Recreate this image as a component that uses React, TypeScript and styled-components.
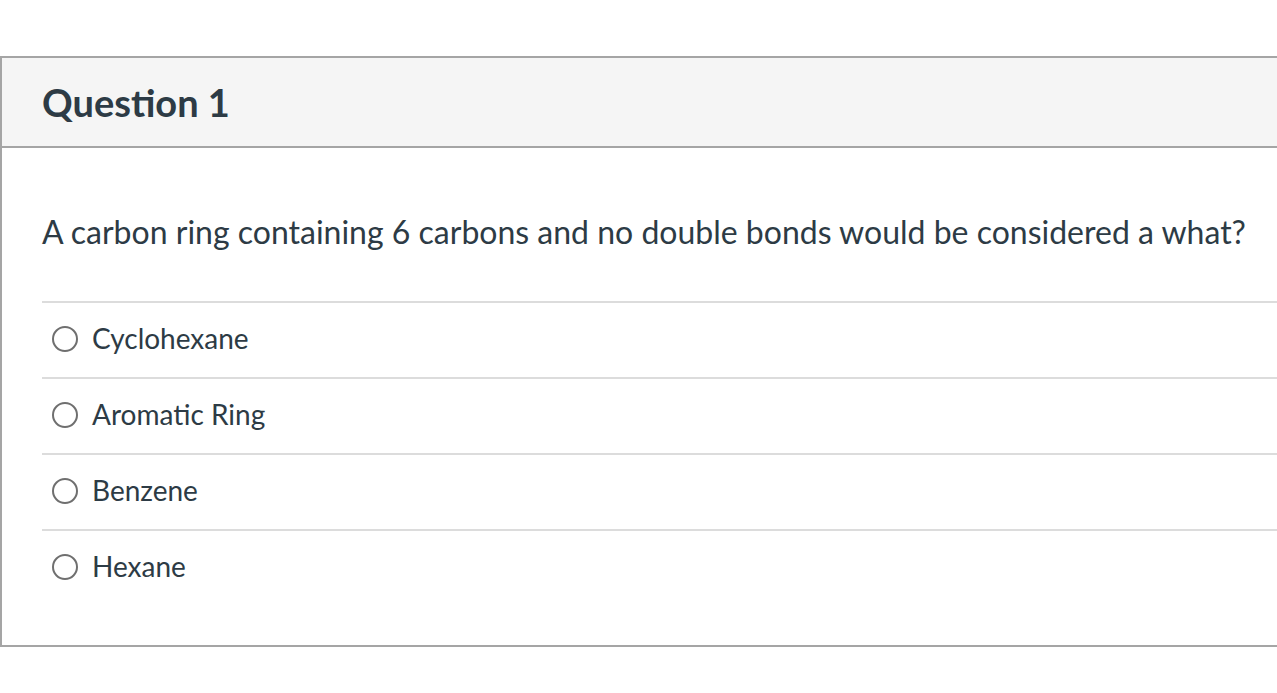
import React from "react";
import styled, { createGlobalStyle } from "styled-components";

const Global = createGlobalStyle`
  html, body { margin: 0; padding: 0; background: #fff; overflow: hidden; }
  body { font-family: Lato, "Open Sans", sans-serif; color: #2d3b45; }
`;

const Page = styled.div`
  width: 1277px;
  height: 693px;
  overflow: hidden;
  padding-top: 56px;
  box-sizing: border-box;
`;

const Card = styled.section`
  width: 1300px;
  border: 2px solid #a5a5a5;
  box-sizing: border-box;
  background: #fff;
`;

const Header = styled.header`
  height: 88px;
  background: #f5f5f5;
  border-bottom: 2px solid #a5a5a5;
  display: flex;
  align-items: center;
  padding-left: 40px;
`;

const Title = styled.h2`
  margin: 0;
  font-family: Lato, sans-serif;
  font-weight: 700;
  font-size: 38px;
  color: #2d3b45;
  letter-spacing: 0;
`;

const Body = styled.div`
  padding: 61px 0 40px 40px;
`;

const QuestionText = styled.p`
  margin: 0 0 47px;
  font-size: 32px;
  line-height: 45px;
  color: #2d3b45;
`;

const Answers = styled.ul`
  list-style: none;
  margin: 0;
  padding: 0;
`;

const Answer = styled.li`
  height: 76px;
  border-top: 2px solid #dcdcdc;
  box-sizing: border-box;
  display: flex;
  align-items: center;
  padding-left: 10px;
  padding-bottom: 4px;
  gap: 14px;
`;

const Radio = styled.span`
  width: 22px;
  height: 22px;
  border: 2px solid #6f6f6f;
  border-radius: 50%;
  flex: none;
  margin-top: 2px;
`;

const Label = styled.span`
  font-size: 28px;
  color: #2d3b45;
`;

const options = ["Cyclohexane", "Aromatic Ring", "Benzene", "Hexane"];

export default function App() {
  return (
    <Page>
      <Global />
      <Card>
        <Header>
          <Title>Question 1</Title>
        </Header>
        <Body>
          <QuestionText>
            A carbon ring containing 6 carbons and no double bonds would be considered a what?
          </QuestionText>
          <Answers>
            {options.map((o) => (
              <Answer key={o}>
                <Radio />
                <Label>{o}</Label>
              </Answer>
            ))}
          </Answers>
        </Body>
      </Card>
    </Page>
  );
}
